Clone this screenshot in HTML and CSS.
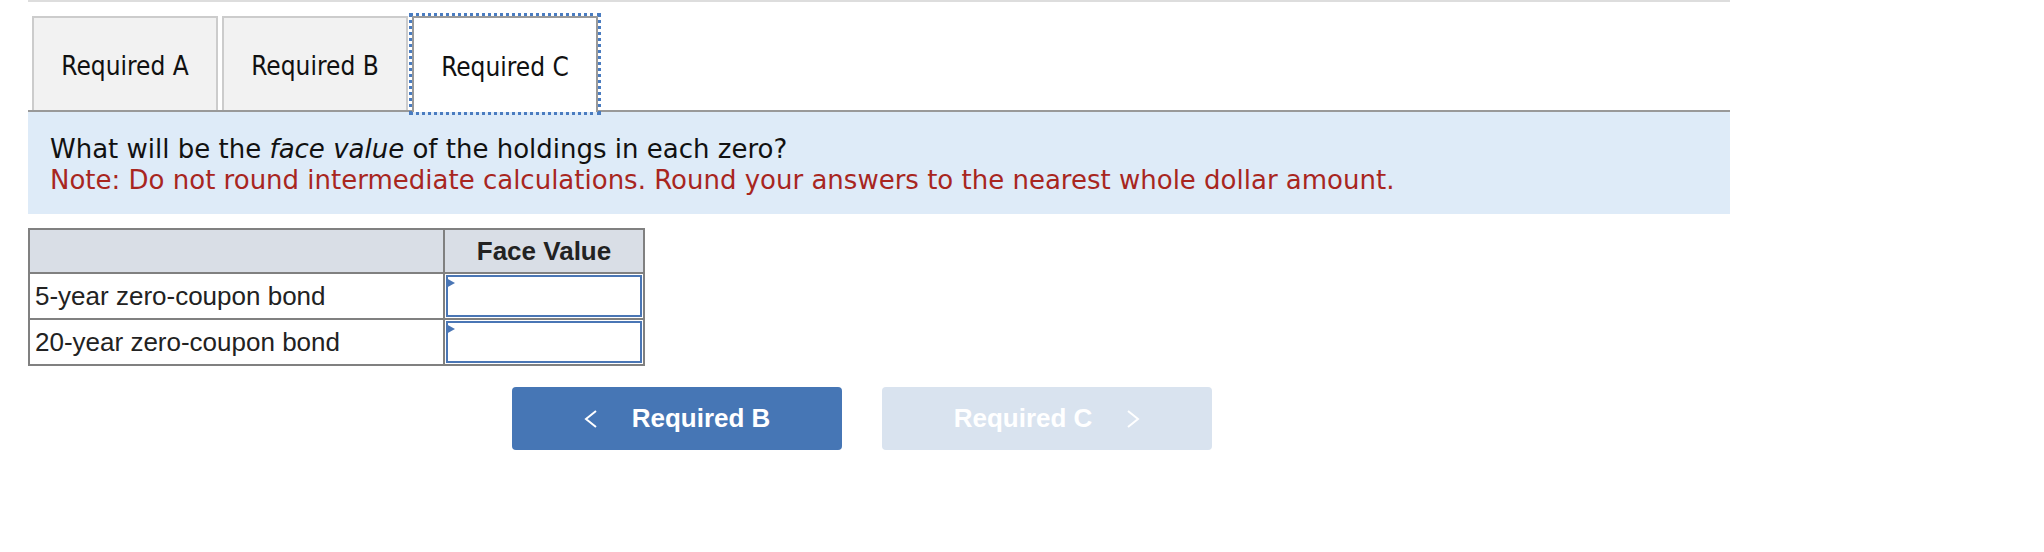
FILE: index.html
```html
<!DOCTYPE html>
<html lang="en">
<head>
<meta charset="utf-8">
<title>Required C</title>
<link rel="stylesheet" href="styles.css">
</head>
<body>
<div class="page">
  <div class="tabs">
    <button class="tab">Required A</button>
    <button class="tab">Required B</button>
    <button class="tab tab-active">Required C</button>
  </div>
  <div class="prompt">
    <p class="question">What will be the <em>face value</em> of the holdings in each zero?</p>
    <p class="note">Note: Do not round intermediate calculations. Round your answers to the nearest whole dollar amount.</p>
  </div>
  <table class="grid">
    <thead>
      <tr>
        <th class="label-col"></th>
        <th class="value-col">Face Value</th>
      </tr>
    </thead>
    <tbody>
      <tr>
        <td class="label">5-year zero-coupon bond</td>
        <td class="entry"><div class="entry-box"><input type="text" class="entry-input"></div></td>
      </tr>
      <tr>
        <td class="label">20-year zero-coupon bond</td>
        <td class="entry"><div class="entry-box"><input type="text" class="entry-input"></div></td>
      </tr>
    </tbody>
  </table>
  <div class="nav">
    <button class="nav-btn nav-prev">
      <svg class="chev" width="14" height="18" viewBox="0 0 14 18"><polyline points="12,1 2,9 12,17" fill="none" stroke="#fff" stroke-width="2"/></svg>
      <span>Required B</span>
    </button>
    <button class="nav-btn nav-next">
      <span>Required C</span>
      <svg class="chev" width="14" height="18" viewBox="0 0 14 18"><polyline points="2,1 12,9 2,17" fill="none" stroke="#fff" stroke-width="2"/></svg>
    </button>
  </div>
</div>
</body>
</html>
```
FILE: styles.css
```css
html, body {
  margin: 0;
  padding: 0;
  background: #fff;
}

.page {
  margin-left: 28px;
  width: 1702px;
  border-top: 2px solid #dddddd;
}

.tabs {
  display: flex;
  gap: 4px;
  padding: 14px 0 0 4px;
  border-bottom: 2px solid #999999;
  height: 94px;
  align-items: flex-end;
}

.tab {
  box-sizing: border-box;
  width: 186px;
  height: 94px;
  background: #f2f2f2;
  border: 2px solid #cccccc;
  border-bottom: none;
  font-family: "DejaVu Sans Condensed", "DejaVu Sans", sans-serif;
  font-stretch: semi-condensed;
  font-size: 26px;
  color: #111;
  padding: 4px 0 0;
  margin: 0;
}

.tab-active {
  background: #fff;
  border-color: #999999;
  height: 96px;
  margin-bottom: -2px;
  position: relative;
  outline: 3px dotted #4a7cc0;
  outline-offset: 0;
}

.prompt {
  background: #deebf8;
  padding: 22px 22px 18px;
  font-family: "DejaVu Sans", Verdana, sans-serif;
  font-size: 26px;
  line-height: 31px;
}

.prompt p {
  margin: 0;
}

.question {
  color: #111;
}

.note {
  color: #a8261f;
}

.grid {
  margin-top: 14px;
  border-collapse: collapse;
  font-family: "Liberation Sans", Arial, sans-serif;
  font-size: 26px;
  color: #222;
}

.grid th,
.grid td {
  border: 2px solid #808080;
  padding: 0;
}

.grid th {
  background: #d9dee6;
  height: 42px;
  font-weight: bold;
  text-align: center;
}

.label-col {
  width: 413px;
}

.value-col {
  width: 198px;
}

.grid td {
  height: 42px;
  background: #fff;
}

.label {
  padding-left: 5px !important;
  white-space: nowrap;
}

.entry {
  padding: 1px !important;
}

.entry-box {
  position: relative;
  height: 42px;
}

.entry-box::before {
  content: "";
  position: absolute;
  left: 0;
  top: 3px;
  border-top: 5px solid transparent;
  border-bottom: 5px solid transparent;
  border-left: 9px solid #4a76b5;
}

.entry-input {
  box-sizing: border-box;
  width: 100%;
  height: 42px;
  border: 2px solid #4a76b5;
  background: #fff;
  margin: 0;
  padding: 0 6px;
  font-family: "Liberation Sans", Arial, sans-serif;
  font-size: 24px;
  outline: none;
  display: block;
}

.nav {
  display: flex;
  gap: 40px;
  margin-top: 21px;
  padding-left: 484px;
}

.nav-btn {
  box-sizing: border-box;
  width: 330px;
  height: 63px;
  border: none;
  border-radius: 4px;
  display: flex;
  align-items: center;
  justify-content: center;
  gap: 34px;
  font-family: "Liberation Sans", Arial, sans-serif;
  font-weight: bold;
  font-size: 26px;
  color: #fff;
  padding: 0;
  margin: 0;
}

.nav-prev {
  background: #4676b5;
}

.nav-next {
  background: #d9e3ef;
}

.chev {
  display: block;
}
```
